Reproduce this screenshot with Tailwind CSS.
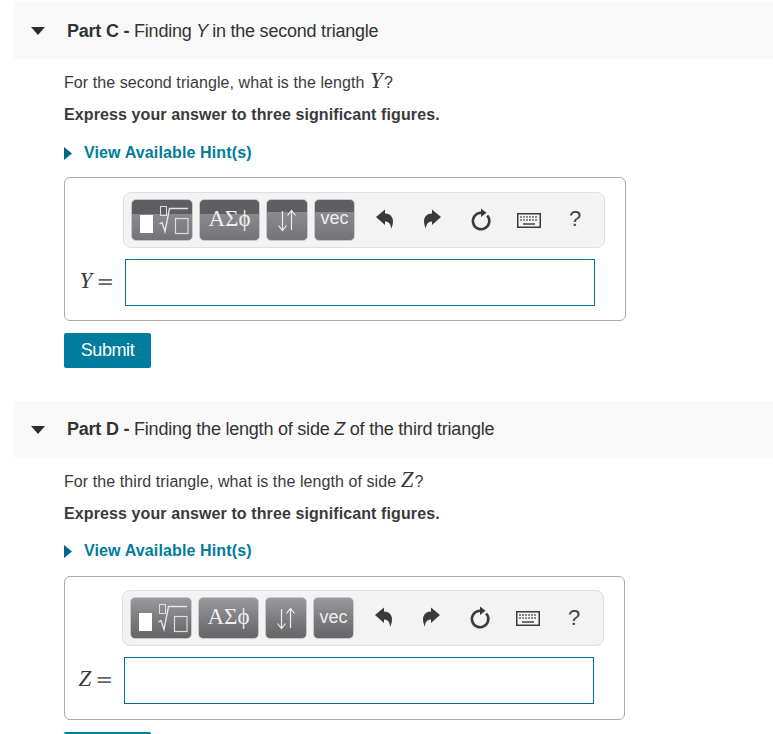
<!DOCTYPE html>
<html lang="en">
<head>
  <meta charset="UTF-8" />
  <meta name="viewport" content="width=device-width, initial-scale=1" />
  <title>Part C and Part D</title>
  <script src="https://cdn.jsdelivr.net/npm/@tailwindcss/browser@4"></script>
</head>
<body class="bg-white h-[734px] overflow-hidden font-['Liberation_Sans',Arial,sans-serif] text-[#3a3a3a]">

  <!-- Part C -->
  <section class="pt-[2px] h-[401px]">
    <div class="ml-[14px] h-[57px] bg-[#f9f9f9] flex items-center">
      <svg class="ml-[17px] w-[14px] h-[8px]" viewBox="0 0 14 8"><path d="M0 0H14L7 8Z" fill="#2d2d2d"/></svg>
      <h2 class="ml-[22px] pt-[1px] text-[18px] tracking-[-0.22px] text-[#333]"><b>Part C - </b>Finding <i class="pr-[4px]">Y</i>in the second triangle</h2>
    </div>
    <div class="ml-[64px] w-[562px]">
      <p class="mt-[10px] h-[26px] leading-[24px] text-[16px] tracking-[0.08px]">For the second triangle, what is the length <i class="font-['Liberation_Serif',serif] text-[23px] leading-none pl-[1px] pr-[1px]">Y</i>?</p>
      <p class="mt-[10px] h-[20px] flex items-center text-[16px] font-bold tracking-[0.1px]">Express your answer to three significant figures.</p>
      <div class="mt-[18px] h-[20px] flex items-center text-[16px] font-bold tracking-[0.13px] text-[#007c9c]">
        <svg class="w-[8px] h-[13px]" viewBox="0 0 8 13"><path d="M0 0L8 6.5L0 13Z" fill="#00688a"/></svg>
        <span class="ml-[12px]">View Available Hint(s)</span>
      </div>
      <div class="mt-[14px] h-[144px] border border-[#aaa] rounded-[6px] pl-[58px] pt-[14px]">
        <div class="w-[482px] h-[56px] bg-[#f3f3f3] border border-[#e0e0e0] rounded-[8px] flex items-center pl-[7px]">
          <div class="w-[62px] h-[42px] rounded-[5px] bg-[linear-gradient(#5f5f62_0,#5f5f62_34%,#8a8a90_34%,#747478_100%)] border border-[#c8c8c8]">
            <svg class="w-[60px] h-[40px]" viewBox="0 0 60 40"><rect x="8" y="15" width="13" height="18" fill="#fff"/><rect x="28.5" y="6.5" width="6" height="9" fill="none" stroke="#ddd"/><path d="M27.5 24L30 22.5L33 31.5L37.5 8.5H56" fill="none" stroke="#e4e4e4" stroke-width="1.4"/><rect x="43.5" y="18.5" width="12.5" height="15" fill="none" stroke="#ddd" stroke-width="1.2"/></svg>
          </div>
          <div class="ml-[6px] w-[61px] h-[42px] rounded-[5px] bg-[linear-gradient(#5f5f62_0,#5f5f62_34%,#8a8a90_34%,#747478_100%)] border border-[#c8c8c8] flex items-center justify-center font-['Liberation_Serif',serif] text-[23px] text-[#eee] pb-[2px]">ΑΣϕ</div>
          <div class="ml-[6px] w-[42px] h-[42px] rounded-[5px] bg-[linear-gradient(#5f5f62_0,#5f5f62_30%,#8a8a90_30%,#747478_100%)] border border-[#c8c8c8]">
            <svg class="w-[40px] h-[40px]" viewBox="0 0 40 40" fill="none" stroke="#eee" stroke-width="1.2"><path d="M15.5 11V30M11.5 25.5L15.5 30.5L19.5 25.5M24.5 30V11M20.5 15.5L24.5 10.5L28.5 15.5"/></svg>
          </div>
          <div class="ml-[6px] w-[41px] h-[42px] rounded-[5px] bg-[linear-gradient(#5f5f62_0,#5f5f62_30%,#8a8a90_30%,#747478_100%)] border border-[#c8c8c8] flex items-center justify-center text-[18px] text-[#eee] pb-[4px]">vec</div>
          <svg class="ml-[21px] mb-[3px] w-[17px] h-[20px]" viewBox="0 0 17 20"><path d="M0 8L9 .5V4.5C14 4.5 17 8 17 12.5C17 15 16 18 15 20C15 14.5 12.5 12.5 9 12.5V16Z" fill="#3a3a3a"/></svg>
          <svg class="ml-[31px] mb-[3px] w-[17px] h-[20px]" viewBox="0 0 17 20"><path d="M17 8L8 .5V4.5C3 4.5 0 8 0 12.5C0 15 1 18 2 20C2 14.5 4.5 12.5 8 12.5V16Z" fill="#3a3a3a"/></svg>
          <svg class="ml-[29px] w-[22px] h-[24px]" viewBox="0 0 22 24"><path d="M11 4.8A8.2 8.2 0 1 0 17.2 7.5" fill="none" stroke="#3a3a3a" stroke-width="2.6"/><path d="M11 .5L16.5 4.8L11 9Z" fill="#3a3a3a"/></svg>
          <svg class="ml-[25px] w-[24px] h-[15px]" viewBox="0 0 24 15"><rect x=".75" y=".75" width="22.5" height="13.5" fill="#f4f4f4" stroke="#3a3a3a" stroke-width="1.5"/><path d="M3 4H21M3 7H21" stroke="#666" stroke-width="1.5" stroke-dasharray="2 1"/><path d="M6 11H18" stroke="#444" stroke-width="1.5"/></svg>
          <span class="ml-[28px] text-[22px] text-[#444] pb-[3px]">?</span>
        </div>
        <div class="flex items-center h-[47px] mt-[11px] -ml-[44px]">
          <span class="w-[46px] flex items-center justify-end pr-[11px] whitespace-nowrap"><i class="font-['Liberation_Serif',serif] text-[23px] pb-[2px]">Y</i><span class="ml-[4px] font-['DejaVu_Sans',sans-serif] text-[21px] text-[#666]">=</span></span>
          <div class="w-[470px] h-[47px] border border-[#007c9c] bg-white"></div>
        </div>
      </div>
      <div class="mt-[12px] w-[87px] h-[35px] bg-[#007c9c] rounded-[2px] text-white text-[18px] tracking-[-0.4px] flex items-center justify-center">Submit</div>
    </div>
  </section>

  <!-- Part D -->
  <section>
    <div class="ml-[14px] h-[57px] bg-[#f9f9f9] flex items-center">
      <svg class="ml-[17px] w-[14px] h-[8px]" viewBox="0 0 14 8"><path d="M0 0H14L7 8Z" fill="#2d2d2d"/></svg>
      <h2 class="ml-[22px] text-[18px] tracking-[-0.22px] text-[#333]"><b>Part D - </b>Finding the length of side <i>Z</i> of the third triangle</h2>
    </div>
    <div class="ml-[64px] w-[561px]">
      <p class="mt-[10px] h-[26px] leading-[24px] text-[16px] tracking-[0.08px]">For the third triangle, what is the length of side <i class="font-['Liberation_Serif',serif] text-[23px] leading-none pr-[1px]">Z</i>?</p>
      <p class="mt-[10px] h-[20px] flex items-center text-[16px] font-bold tracking-[0.1px]">Express your answer to three significant figures.</p>
      <div class="mt-[17px] h-[20px] flex items-center text-[16px] font-bold tracking-[0.13px] text-[#007c9c]">
        <svg class="w-[8px] h-[13px]" viewBox="0 0 8 13"><path d="M0 0L8 6.5L0 13Z" fill="#00688a"/></svg>
        <span class="ml-[12px]">View Available Hint(s)</span>
      </div>
      <div class="mt-[15px] h-[144px] border border-[#aaa] rounded-[6px] pl-[57px] pt-[13px]">
        <div class="w-[482px] h-[56px] bg-[#f3f3f3] border border-[#e0e0e0] rounded-[8px] flex items-center pl-[7px]">
          <div class="w-[62px] h-[42px] rounded-[5px] bg-[linear-gradient(#98989e,#646466)] border border-[#c8c8c8]">
            <svg class="w-[60px] h-[40px]" viewBox="0 0 60 40"><rect x="8" y="15" width="13" height="18" fill="#fff"/><rect x="28.5" y="6.5" width="6" height="9" fill="none" stroke="#ddd"/><path d="M27.5 24L30 22.5L33 31.5L37.5 8.5H56" fill="none" stroke="#e4e4e4" stroke-width="1.4"/><rect x="43.5" y="18.5" width="12.5" height="15" fill="none" stroke="#ddd" stroke-width="1.2"/></svg>
          </div>
          <div class="ml-[6px] w-[61px] h-[42px] rounded-[5px] bg-[linear-gradient(#98989e,#646466)] border border-[#c8c8c8] flex items-center justify-center font-['Liberation_Serif',serif] text-[23px] text-[#eee] pb-[2px]">ΑΣϕ</div>
          <div class="ml-[6px] w-[42px] h-[42px] rounded-[5px] bg-[linear-gradient(#98989e,#646466)] border border-[#c8c8c8]">
            <svg class="w-[40px] h-[40px]" viewBox="0 0 40 40" fill="none" stroke="#eee" stroke-width="1.2"><path d="M15.5 11V30M11.5 25.5L15.5 30.5L19.5 25.5M24.5 30V11M20.5 15.5L24.5 10.5L28.5 15.5"/></svg>
          </div>
          <div class="ml-[6px] w-[41px] h-[42px] rounded-[5px] bg-[linear-gradient(#98989e,#646466)] border border-[#c8c8c8] flex items-center justify-center text-[18px] text-[#eee] pb-[2px]">vec</div>
          <svg class="ml-[21px] mb-[3px] w-[17px] h-[20px]" viewBox="0 0 17 20"><path d="M0 8L9 .5V4.5C14 4.5 17 8 17 12.5C17 15 16 18 15 20C15 14.5 12.5 12.5 9 12.5V16Z" fill="#3a3a3a"/></svg>
          <svg class="ml-[31px] mb-[3px] w-[17px] h-[20px]" viewBox="0 0 17 20"><path d="M17 8L8 .5V4.5C3 4.5 0 8 0 12.5C0 15 1 18 2 20C2 14.5 4.5 12.5 8 12.5V16Z" fill="#3a3a3a"/></svg>
          <svg class="ml-[29px] w-[22px] h-[24px]" viewBox="0 0 22 24"><path d="M11 4.8A8.2 8.2 0 1 0 17.2 7.5" fill="none" stroke="#3a3a3a" stroke-width="2.6"/><path d="M11 .5L16.5 4.8L11 9Z" fill="#3a3a3a"/></svg>
          <svg class="ml-[25px] w-[24px] h-[15px]" viewBox="0 0 24 15"><rect x=".75" y=".75" width="22.5" height="13.5" fill="#f4f4f4" stroke="#3a3a3a" stroke-width="1.5"/><path d="M3 4H21M3 7H21" stroke="#666" stroke-width="1.5" stroke-dasharray="2 1"/><path d="M6 11H18" stroke="#444" stroke-width="1.5"/></svg>
          <span class="ml-[28px] text-[22px] text-[#444] pb-[2px]">?</span>
        </div>
        <div class="flex items-center h-[47px] mt-[11px] -ml-[44px]">
          <span class="w-[46px] flex items-center justify-end pr-[11px] whitespace-nowrap"><i class="font-['Liberation_Serif',serif] text-[23px] pb-[2px]">Z</i><span class="ml-[4px] font-['DejaVu_Sans',sans-serif] text-[21px] text-[#666]">=</span></span>
          <div class="w-[470px] h-[47px] border border-[#006e8c] bg-white"></div>
        </div>
      </div>
      <div class="mt-[12px] w-[87px] h-[35px] bg-[#007c9c] rounded-[2px]"></div>
    </div>
  </section>
</body>
</html>
